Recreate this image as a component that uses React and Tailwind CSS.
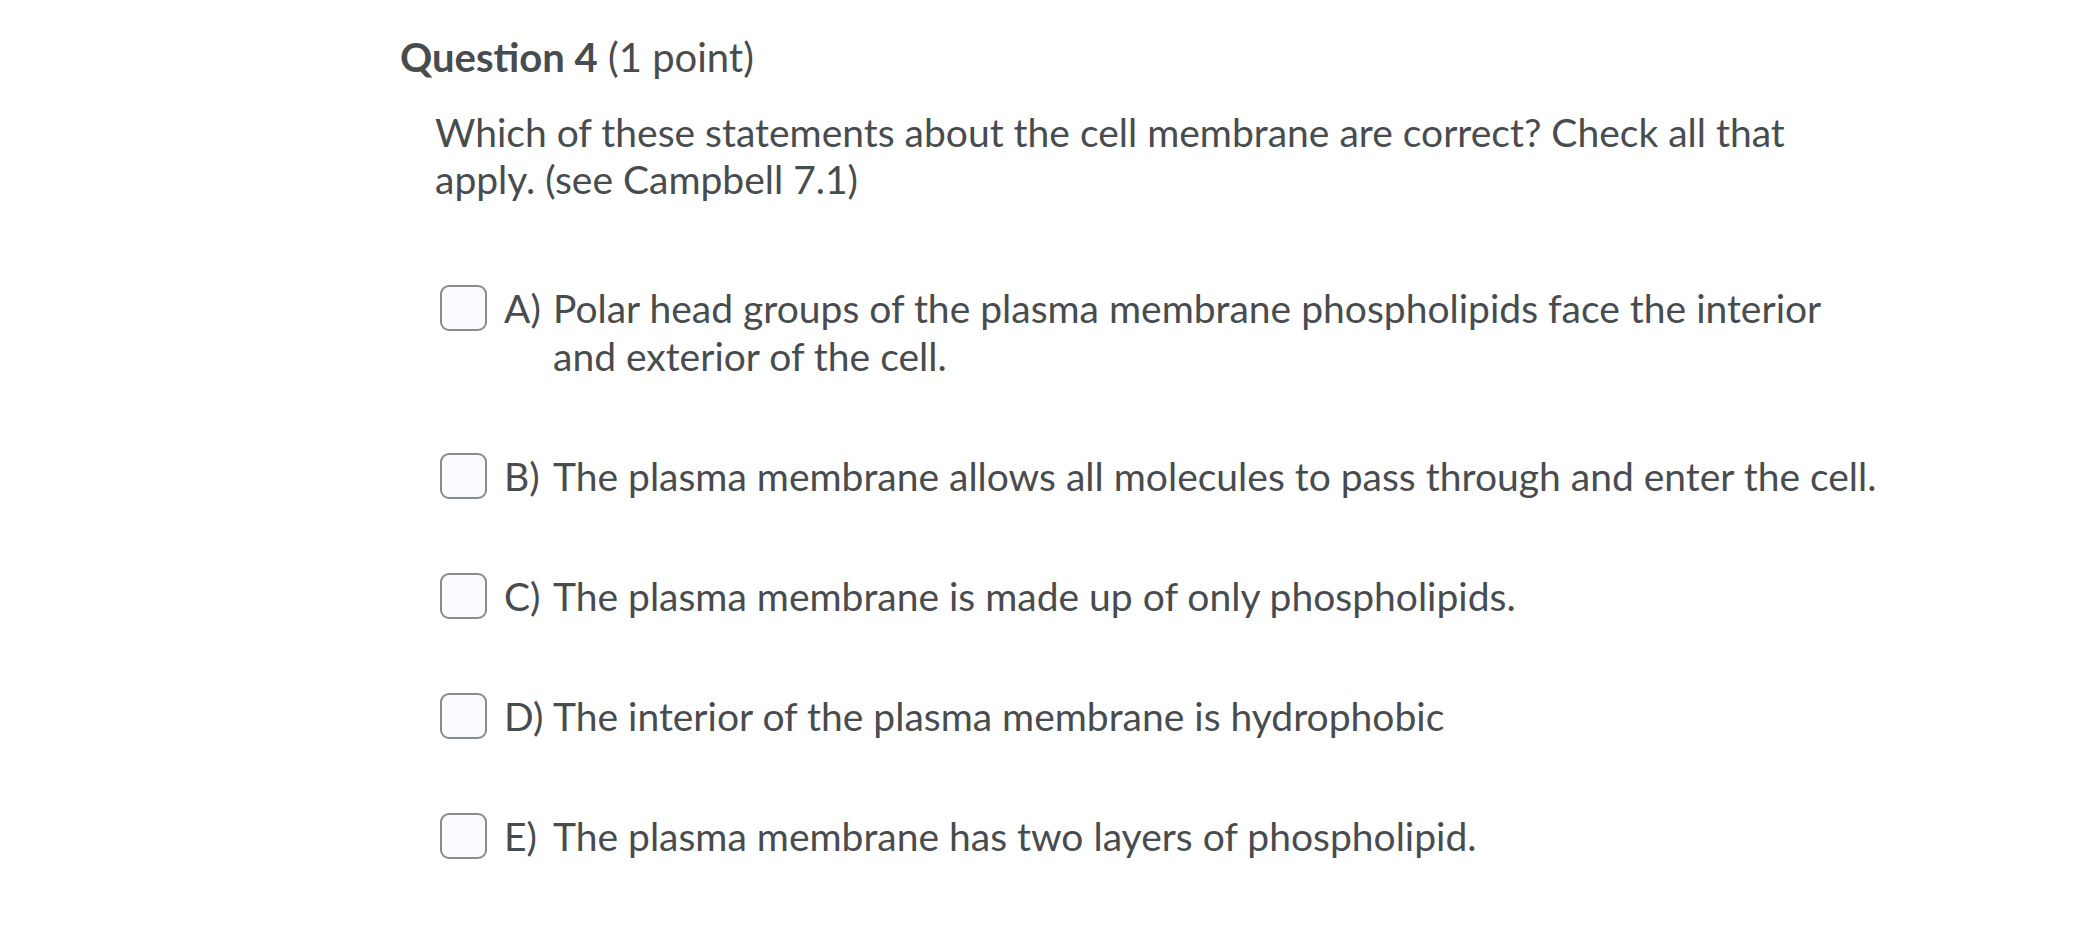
const OPTIONS = [
  { key: 'A', text: 'Polar head groups of the plasma membrane phospholipids face the interior and exterior of the cell.' },
  { key: 'B', text: 'The plasma membrane allows all molecules to pass through and enter the cell.' },
  { key: 'C', text: 'The plasma membrane is made up of only phospholipids.' },
  { key: 'D', text: 'The interior of the plasma membrane is hydrophobic' },
  { key: 'E', text: 'The plasma membrane has two layers of phospholipid.' },
]

function Option({ letter, text }) {
  return (
    <li className="flex items-start">
      <input
        type="checkbox"
        className="appearance-none shrink-0 w-[47px] h-[46px] mt-[1px] rounded-[9px] border-2 border-[#868c8f] bg-[#f9fbff]"
      />
      <div className="flex ml-[17px]">
        <span className="w-[49px] shrink-0">{letter})</span>
        <span className="w-[1334px]">{text}</span>
      </div>
    </li>
  )
}

export default function App() {
  return (
    <div className="min-h-screen bg-white text-[#494c4e] pl-[400px] pt-[33px]" style={{ fontFamily: 'Lato, "Open Sans", sans-serif' }}>
      <h2 className="text-[40px] leading-[48px]">
        <span className="font-bold">Question 4</span> (1 point)
      </h2>
      <div className="pl-[35px] mt-[28px] w-[1480px] text-[39px] leading-[47px]">
        Which of these statements about the cell membrane are correct? Check all that apply. (see Campbell 7.1)
      </div>
      <ul className="mt-[81px] pl-[40px] space-y-[72px] text-[39px] leading-[48px]">
        {OPTIONS.map(o => <Option key={o.key} letter={o.key} text={o.text} />)}
      </ul>
    </div>
  )
}
